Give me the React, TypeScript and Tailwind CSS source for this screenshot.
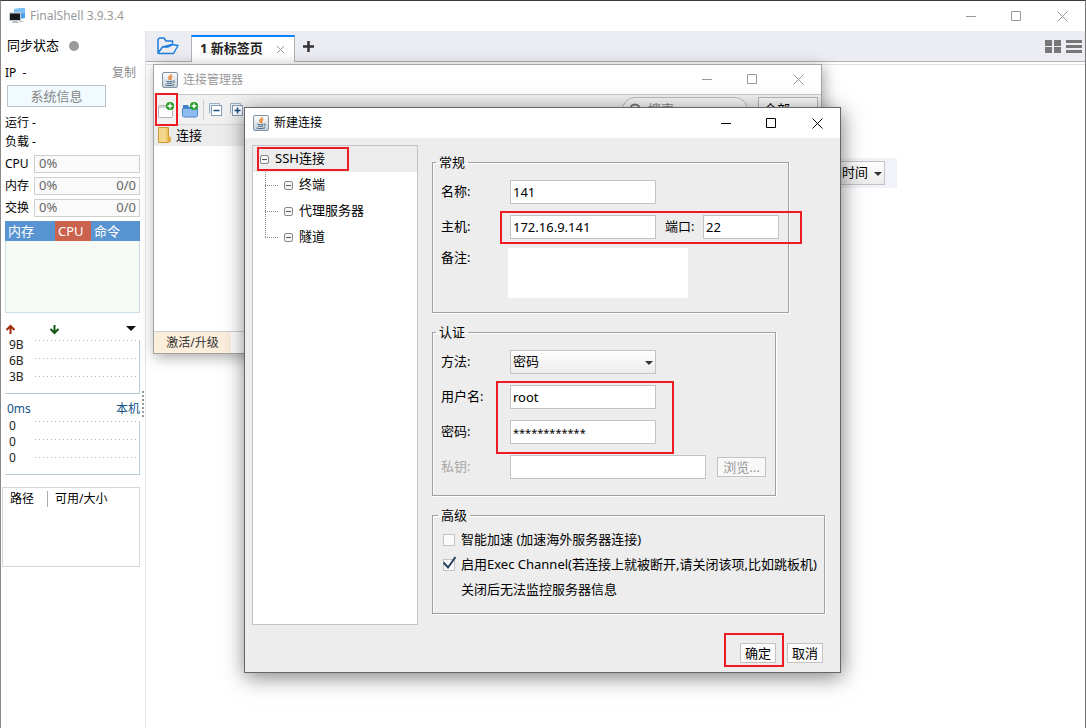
import type { ReactNode } from "react";

function Mark({ className }: { className: string }) {
  return <span aria-hidden="true" className={`pointer-events-none absolute z-10 border-2 border-[#ed1c24] ${className}`} />;
}

function JavaIcon() {
  return (
    <svg width="16" height="16" viewBox="0 0 16 16" aria-hidden="true" className="shrink-0">
      <defs>
        <linearGradient id="javaBg" x1="0" y1="0" x2="0" y2="1">
          <stop offset="0" stopColor="#ffffff" />
          <stop offset="1" stopColor="#c4cdd6" />
        </linearGradient>
      </defs>
      <rect x="0.5" y="0.5" width="15" height="15" rx="1.5" fill="url(#javaBg)" stroke="#7f93a5" />
      <path d="M9.3 2c.6 1.5-2.8 2.3-2.6 3.8.1.9 1.2 1.300 1 2.400M10.300 4.300c-1.500.6-2.200 1.300-1.600 2.200.4.600.3 1-.2 1.500" fill="none" stroke="#e8822d" strokeWidth="1.300" />
      <path d="M4.300 9.200c1.600.7 4.600.7 6.200 0M5 11c1.400.6 3.700.6 5 0M3.400 13c2.300.8 7 .7 8.800-.3M11 8.900c2.100-.5 2.100 1.800-.4 2.200" fill="none" stroke="#41688a" strokeWidth="1" />
    </svg>
  );
}

function AppIcon() {
  return (
    <svg width="17" height="17" viewBox="0 0 17 17" aria-hidden="true" className="shrink-0">
      <path d="M5 1l11-1v10l-5 1z" fill="#4aa3ee" />
      <path d="M5 1l11-1v5L5 6z" fill="#7cc0f5" />
      <path d="M11 12l4 2h-5z" fill="#b9c3cc" />
      <path d="M0 4.500l12-.5v9H0z" fill="#c7ccd0" />
      <path d="M1 5.500h10v6.500H1z" fill="#15181c" />
      <path d="M4 13h4l2 2H3z" fill="#b8bcc0" />
    </svg>
  );
}

function WindowControls({ tone }: { tone: string }) {
  return (
    <div className={`ml-auto flex h-full ${tone}`}>
      <button type="button" aria-label="最小化" className="grid w-[46px] place-items-center">
        <svg width="11" height="11" stroke="currentColor" fill="none"><path d="M0 5.500h10" /></svg>
      </button>
      <button type="button" aria-label="最大化" className="grid w-[45px] place-items-center">
        <svg width="11" height="11" stroke="currentColor" fill="none"><path d="M.5.5h9v9h-9z" /></svg>
      </button>
      <button type="button" aria-label="关闭" className="grid w-[46px] place-items-center">
        <svg width="11" height="11" stroke="currentColor" fill="none"><path d="M.5.5l10 10M10.500.5l-10 10" /></svg>
      </button>
    </div>
  );
}

function Meter({ label, left, right }: { label: string; left: string; right?: string }) {
  return (
    <div className="flex h-[18px] items-center">
      <span className="w-[29px] text-xs">{label}</span>
      <span className="flex h-full flex-1 items-center justify-between border border-[#cfcfcf] bg-[#fafafa] pr-[3px] pl-1 text-[13px] text-[#666]">
        <span>{left}</span>
        <span>{right}</span>
      </span>
    </div>
  );
}

function Chart({ labels }: { labels: string[] }) {
  return (
    <div className="flex h-[54px] border-r border-b border-[#b5cdd8] pb-2">
      <div className="-mt-[3px] flex w-[29px] flex-col justify-between pl-1 text-xs leading-4 text-[#222]">
        {labels.map((l, i) => <span key={i}>{l}</span>)}
      </div>
      <svg className="h-[38px] flex-1" aria-hidden="true" stroke="#b4b4b4" strokeDasharray="1 3">
        <line x1="1" y1="0.5" x2="102" y2="0.5" />
        <line x1="1" y1="18.5" x2="102" y2="18.5" />
        <line x1="1" y1="36.5" x2="102" y2="36.5" />
      </svg>
    </div>
  );
}

function Sidebar() {
  return (
    <aside className="relative w-[145px] shrink-0 border-r border-[#e4e4e4] pt-[5px] pr-[5px] pl-1">
      <div className="flex h-5 items-center gap-[10px] pl-[2px] text-[13px]">
        同步状态<span className="size-[10px] rounded-full bg-[#999]" />
      </div>
      <div className="mt-[7px] flex h-5 items-center justify-between pr-1 text-xs">
        <span className="whitespace-pre">IP  -</span>
        <button type="button" className="text-[#8c8c8c]">复制</button>
      </div>
      <button type="button" className="mt-[2px] ml-[2px] block h-[22px] w-[99px] border border-[#b8c4cc] bg-[#f1fafe] text-[13px] leading-[18px] text-[#858585]">系统信息</button>
      <div className="mt-[6px] h-[19px] text-xs leading-[19px]">运行 -</div>
      <div className="h-[19px] text-xs leading-[19px]">负载 -</div>
      <div className="mt-1 flex flex-col gap-1">
        <Meter label="CPU" left="0%" />
        <Meter label="内存" left="0%" right="0/0" />
        <Meter label="交换" left="0%" right="0/0" />
      </div>
      <div className="mt-1 h-[92px] border border-[#cbdde6] bg-[#f5faf5]">
        <div className="-mx-px -mt-px flex h-5 bg-[#5894d2] text-[13px] leading-5 text-white">
          <span className="w-[50px] pl-[3px]">内存</span>
          <span className="w-9 bg-[#cb624e] pl-[3px]">CPU</span>
          <span className="pl-[3px]">命令</span>
        </div>
      </div>
      <div className="mt-[11px] flex h-[11px] items-center">
        <svg width="11" height="11" fill="none" stroke="#a22d0b" strokeWidth="2" aria-hidden="true"><path d="M5.500 10V2M1.500 6l4-4 4 4" /></svg>
        <svg className="ml-[33px]" width="11" height="11" fill="none" stroke="#145a14" strokeWidth="2" aria-hidden="true"><path d="M5.500 1v8M1.500 5l4 4 4-4" /></svg>
        <svg className="mr-1 ml-auto" width="10" height="9" fill="#111" aria-hidden="true"><path d="M0 1h10L5 6z" /></svg>
      </div>
      <div className="mt-[5px]"><Chart labels={["9B", "6B", "3B"]} /></div>
      <div className="mt-[5px] flex h-5 items-center justify-between pl-[2px] text-xs text-[#155286]">
        <span>0ms</span><span>本机</span>
      </div>
      <div className="mt-[2px]"><Chart labels={["0", "0", "0"]} /></div>
      <div className="mt-3 -ml-[3px] h-[80px] border border-[#d6d6d6] pt-[3px]">
        <div className="flex items-center text-xs leading-4">
          <span className="w-[44px] pl-[7px]">路径</span>
          <span className="border-l border-[#aaa] pl-[7px]">可用/大小</span>
        </div>
      </div>
      <span aria-hidden="true" className="absolute top-[360px] right-px h-[26px] border-l-2 border-dotted border-[#999]" />
    </aside>
  );
}

function PlusBadge() {
  return (
    <>
      <circle cx="12" cy="4" r="4" fill="#1f9b25" />
      <path d="M12 1.500v5M9.500 4h5" stroke="#fff" strokeWidth="1.500" />
    </>
  );
}

function SquareIcon({ plus }: { plus?: boolean }) {
  return (
    <svg width="14" height="14" fill="none" aria-hidden="true">
      <path d="M.5 10.500V.5h10v2" stroke="#9aafc4" fill="#e8f0f7" />
      <rect x="2.500" y="2.500" width="10" height="10" fill="#fff" stroke="#7f9cb8" />
      <path d={plus ? "M4.500 7.500h6M7.500 4.500v6" : "M4.500 7.500h6"} stroke="#164f80" strokeWidth="1.500" />
    </svg>
  );
}

function ManagerWindow() {
  return (
    <section aria-label="连接管理器" className="absolute top-[63px] left-[152px] w-[669px] border border-[#a4a4a4] bg-white shadow-[2px_3px_14px_rgba(0,0,0,0.35)]">
      <header className="flex h-[30px] items-center border-b border-[#c8c8c8] pl-2 text-xs text-[#999]">
        <JavaIcon /><h2 className="ml-[5px]">连接管理器</h2>
        <WindowControls tone="text-[#999]" />
      </header>
      <div className="relative flex h-[30px] items-center border-b border-[#d8d8d8] bg-[#f1f1f1] pl-1">
        <button type="button" aria-label="新建连接">
          <svg width="18" height="16" aria-hidden="true">
            <rect x=".5" y="3.500" width="14" height="12" rx="1" fill="#fdfdfd" stroke="#b5b5b5" />
            <path d="M1 4h13v2H1z" fill="#d4d4d4" />
            <PlusBadge />
          </svg>
        </button>
        <button type="button" aria-label="新建文件夹" className="ml-[6px]">
          <svg width="18" height="16" aria-hidden="true">
            <path d="M1 3h5l1 2h7v9H1z" fill="#3f7fc6" />
            <path d="M.5 6.500h15v7l-1 1.500h-13l-1-1.500z" fill="#8fbcf0" stroke="#4a86ca" />
            <PlusBadge />
          </svg>
        </button>
        <span className="mr-[5px] ml-[3px] h-5 w-px bg-[#ccc]" />
        <button type="button" aria-label="全部折叠"><SquareIcon /></button>
        <button type="button" aria-label="全部展开" className="ml-[7px]"><SquareIcon plus /></button>
        <div className="mr-[3px] ml-auto flex h-[26px] gap-[10px]">
          <label className="flex w-[126px] items-center rounded-full border border-[#bbb] bg-[#f6f6f6] pl-[6px]">
            <svg width="14" height="14" fill="none" stroke="#777" strokeWidth="2" aria-hidden="true"><circle cx="6" cy="6" r="4.500" /><path d="M9 9l4 4" /></svg>
            <input aria-label="搜索" placeholder="搜索" className="ml-[5px] w-[80px] bg-transparent text-[13px] placeholder:text-[#888]" />
          </label>
          <select aria-label="范围" className="w-[60px] appearance-none border border-[#b8b8b8] bg-[#f8f8f8] pl-[5px] text-[13px]"><option>全部</option></select>
        </div>
        <Mark className="-top-[2px] left-px h-[33px] w-[23px]" />
      </div>
      <div className="h-[206px]">
        <div className="flex h-[21px] items-center bg-[#ececec] pl-1 text-[13px]">
          <svg width="14" height="17" aria-hidden="true">
            <path d="M.5.5h10v15H.5z" fill="#edc566" stroke="#c79a3c" />
            <path d="M1 1h7v14H1z" fill="#f4d78c" />
            <path d="M10 9l3 1v5l-3 1z" fill="#e3ae49" />
          </svg>
          <span className="ml-[4px]">连接</span>
        </div>
      </div>
      <footer className="h-[22px] border-t border-[#c9d2da] text-xs">
        <a href="#upgrade" className="block h-full w-[77px] bg-[#fbeedb] text-center leading-[21px] text-[#333]">激活/升级</a>
      </footer>
    </section>
  );
}

function TreeBox() {
  return (
    <svg width="9" height="9" fill="#f6f6f6" stroke="#888" aria-hidden="true" className="shrink-0"><rect x=".5" y=".5" width="8" height="8" rx="1.500" /><path d="M2 4.500h5" stroke="#555" /></svg>
  );
}

function TreePane() {
  return (
    <nav className="min-h-[480px] w-[166px] border border-[#c4c4c4] bg-white">
      <div className="relative flex h-[26px] items-center gap-[6px] bg-[#ececec] pl-[7px]">
        <TreeBox />SSH连接
        <Mark className="top-px left-1 h-[24px] w-[92px]" />
      </div>
      <ul>
        {["终端", "代理服务器", "隧道"].map((name, i) => (
          <li key={name} className="flex h-[26px] items-center gap-[6px] pl-3">
            <svg width="13" height="26" stroke="#888" strokeDasharray="1 1" aria-hidden="true" className="shrink-0">
              <path d={i === 2 ? "M.5 0v13" : "M.5 0v26"} /><path d="M0 13.500h13" />
            </svg>
            <TreeBox /><span>{name}</span>
          </li>
        ))}
      </ul>
    </nav>
  );
}

function Group({ title, className, children }: { title: string; className: string; children: ReactNode }) {
  return (
    <fieldset className={`min-w-0 border border-[#a0a0a0] shadow-[1px_1px_0_#fff,inset_1px_1px_0_#fff] ${className}`}>
      <legend className="-ml-[5px] h-[18px] px-[3px] leading-[18px]">{title}</legend>
      {children}
    </fieldset>
  );
}

const field = "h-6 border border-[#c3c3c3] bg-white px-[2px] outline-none";

function Row({ id, label, dim, children }: { id: string; label: string; dim?: boolean; children: ReactNode }) {
  return (
    <div className="flex items-center">
      <label htmlFor={id} className={dim ? "w-[69px] text-[#a8a8a8]" : "w-[69px]"}>{label}</label>
      {children}
    </div>
  );
}

function ConnectionDialog() {
  return (
    <form role="dialog" aria-label="新建连接" className="absolute top-[106px] left-[243px] w-[597px] border border-[#666] bg-[#ededed] text-[13px] shadow-[1px_4px_20px_rgba(0,0,0,0.5)]">
      <header className="flex h-[30px] items-center bg-white pl-2 text-xs">
        <JavaIcon /><h2 className="ml-[5px]">新建连接</h2>
        <WindowControls tone="text-black" />
      </header>
      <div className="flex gap-[14px] pt-[7px] pr-[15px] pl-[7px]">
        <TreePane />
        <div className="flex flex-1 flex-col gap-[10px] pt-2">
          <Group title="常规" className="w-[357px] px-2 pb-[14px]">
            <div className="flex flex-col gap-[11px] pt-[9px]">
              <Row id="name" label="名称:"><input id="name" defaultValue="141" className={`w-[146px] text-[13px] ${field}`} /></Row>
              <div className="relative">
                <Row id="host" label="主机:">
                  <input id="host" defaultValue="172.16.9.141" className={`w-[146px] text-[13px] ${field}`} />
                  <label htmlFor="port" className="ml-[9px] w-[38px]">端口:</label>
                  <input id="port" defaultValue="22" className={`w-[76px] text-[13px] ${field}`} />
                </Row>
                <Mark className="-top-1 left-[59px] h-[33px] w-[302px]" />
              </div>
            </div>
            <div className="mt-[9px] flex">
              <label htmlFor="note" className="w-[67px]">备注:</label>
              <textarea id="note" className="block h-[50px] w-[180px] resize-none bg-white px-[2px] outline-none" />
            </div>
          </Group>
          <Group title="认证" className="w-[344px] px-2 pb-4">
            <div className="relative flex flex-col gap-[11px] pt-[9px]">
              <Row id="method" label="方法:">
                <span className="relative">
                  <select id="method" className="block h-6 w-[146px] appearance-none border border-[#c3c3c3] bg-linear-to-b from-white to-[#ececec] px-[2px] text-[13px]"><option>密码</option></select>
                  <svg width="8" height="5" fill="#333" aria-hidden="true" className="pointer-events-none absolute top-[11px] right-[3px]"><path d="M0 0h8L4 4z" /></svg>
                </span>
              </Row>
              <Row id="user" label="用户名:"><input id="user" defaultValue="root" className={`w-[146px] text-[13px] ${field}`} /></Row>
              <Row id="password" label="密码:"><input id="password" defaultValue="************" className={`w-[146px] text-[11px] ${field}`} /></Row>
              <Row id="key" label="私钥:" dim>
                <input id="key" className={`w-[196px] text-[13px] ${field}`} />
                <button type="button" disabled className="ml-[11px] h-5 w-[49px] border border-[#c3c3c3] bg-[#f8f8f8] leading-[18px] text-[#999]">浏览...</button>
              </Row>
              <Mark className="top-[40px] left-[55px] h-[73px] w-[178px]" />
            </div>
          </Group>
          <Group title="高级" className="w-[393px] pb-[11px] pl-[10px]">
            <div className="pt-[3px] whitespace-nowrap">
              <label className="flex h-[25px] items-center gap-[6px]">
                <input type="checkbox" className="size-3 appearance-none border border-[#c3c3c3] bg-[#fafafa]" />
                智能加速 (加速海外服务器连接)
              </label>
              <label className="relative flex h-[25px] items-center gap-[6px]">
                <input type="checkbox" defaultChecked className="size-3 appearance-none border border-[#c3c3c3] bg-[#fafafa]" />
                <svg width="14" height="14" fill="none" stroke="#26415e" strokeWidth="2" aria-hidden="true" className="absolute top-[4px] left-0"><path d="M.5 6.500l4.500 5 7.500-10.500" /></svg>
                启用Exec Channel(若连接上就被断开,请关闭该项,比如跳板机)
              </label>
              <p className="h-[25px] pl-[18px] leading-[25px]">关闭后无法监控服务器信息</p>
            </div>
          </Group>
        </div>
      </div>
      <footer className="flex justify-end gap-[11px] pt-[18px] pr-[17px] pb-[9px]">
        <span className="relative">
          <button type="button" className="block h-5 w-9 border border-[#c3c3c3] bg-[#fafafa] leading-[18px]">确定</button>
          <Mark className="-top-[10px] -left-4 h-[34px] w-[60px]" />
        </span>
        <button type="button" className="h-5 w-9 border border-[#c3c3c3] bg-[#fafafa] leading-[18px]">取消</button>
      </footer>
    </form>
  );
}

export default function App() {
  return (
    <div className="relative flex min-h-screen flex-col overflow-hidden border-t border-r border-l border-t-[#3c3c3c] border-r-[#777] border-l-[#8a8a8a] bg-white font-['Noto_Sans','Noto_Sans_CJK_SC',sans-serif] text-[13px] text-black">
      <header className="flex h-[30px] shrink-0 items-center pl-2 text-xs text-[#999]">
        <AppIcon /><h1 className="ml-1">FinalShell 3.9.3.4</h1>
        <WindowControls tone="text-[#999]" />
      </header>
      <div className="flex flex-1">
        <Sidebar />
        <main className="min-w-0 flex-1">
          <div className="flex h-[31px] items-center border-b border-[#b0b0b4] bg-[#ecedf2] pl-[11px]">
            <button type="button" aria-label="打开">
              <svg width="22" height="18" fill="none" stroke="#1c7edb" strokeWidth="1.500" strokeLinejoin="round" aria-hidden="true">
                <path d="M1 16V2.500L2.500 1H7l2 3h6.500v2.500M1 16l4.500-6L15 7.500l6 1L16.500 16.500H2zM5.500 10h5L15 8" />
              </svg>
            </button>
            <div className="mt-1 ml-3 flex h-[27px] w-[104px] items-center border-x border-t-2 border-x-[#b0b0b4] border-t-[#0a82ff] bg-white pl-2">
              <span className="font-bold whitespace-nowrap text-[#222]">1 新标签页</span>
              <button type="button" aria-label="关闭标签" className="ml-[13px]">
                <svg width="9" height="9" stroke="#999" aria-hidden="true"><path d="M1 1l7 7M8 1l-7 7" /></svg>
              </button>
            </div>
            <button type="button" aria-label="新标签" className="ml-2">
              <svg width="11" height="11" stroke="#333" strokeWidth="2.500" aria-hidden="true"><path d="M5.500 0v11M0 5.500h11" /></svg>
            </button>
            <div className="ml-auto flex gap-[5px] pr-[3px]">
              <button type="button" aria-label="网格视图">
                <svg width="16" height="13" fill="#777" aria-hidden="true"><path d="M0 0h7v6H0zM9 0h7v6H9zM0 7h7v6H0zM9 7h7v6H9z" /></svg>
              </button>
              <button type="button" aria-label="列表视图">
                <svg width="16" height="13" fill="#777" aria-hidden="true"><path d="M0 0h16v3H0zM0 5h16v3H0zM0 10h16v3H0z" /></svg>
              </button>
            </div>
          </div>
          <div className="mt-[2px] flex justify-end border-t border-[#e2e2e2] pt-[93px] pr-[188px]">
            <div className="flex h-[30px] items-center bg-[#f2f3f8] px-3">
              <span className="relative">
                <select aria-label="排序" className="block h-6 w-[78px] appearance-none border border-[#c3c3c3] bg-linear-to-b from-white to-[#ececec] pl-2 text-[13px]"><option>访问时间</option></select>
                <svg width="8" height="5" fill="#333" aria-hidden="true" className="pointer-events-none absolute top-[11px] right-[3px]"><path d="M0 0h8L4 4z" /></svg>
              </span>
            </div>
          </div>
        </main>
      </div>
      <ManagerWindow />
      <ConnectionDialog />
    </div>
  );
}
